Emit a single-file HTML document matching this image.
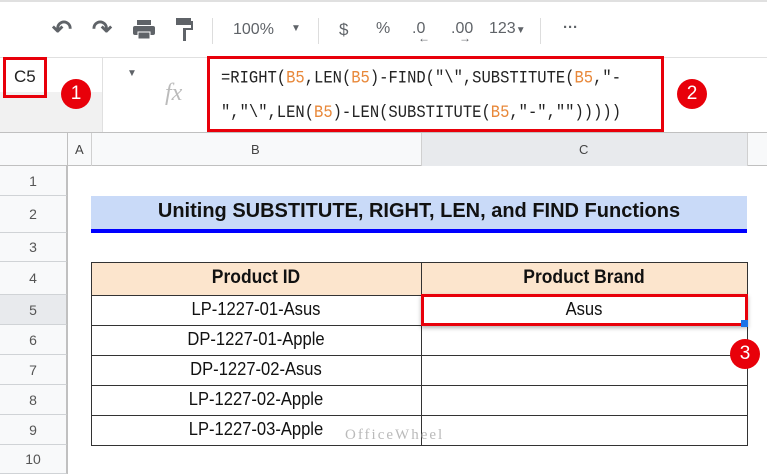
<!DOCTYPE html>
<html><head><meta charset="utf-8"><style>
*{margin:0;padding:0;box-sizing:border-box}
body{width:767px;height:474px;overflow:hidden;background:#fff;font-family:"Liberation Sans",Arial,sans-serif;position:relative}
.a{position:absolute}
.tb{color:#5f6368;font-size:15px}
.rh{position:absolute;left:0;width:67px;background:#f8f9fa;border-bottom:1px solid #d0d3d6;border-right:1px solid #c0c0c0;color:#555;font-size:14px;text-align:center}
.badge{position:absolute;width:30px;height:30px;border-radius:50%;background:#e8000a;color:#fff;font-size:19px;text-align:center;line-height:30px}
.cell{position:absolute;font-size:17px;text-align:center;color:#111;transform:scaleX(0.92)}
.hl{position:absolute;background:#333;height:1px}
.vl{position:absolute;background:#333;width:1px}
.o{color:#e8883a}
</style></head><body>
<div class="a" style="left:0;top:0;width:767px;height:2px;background:#e0e0e0"></div>
<div class="a tb" style="left:52px;top:15px;font-size:24px;font-weight:bold">↶</div>
<div class="a tb" style="left:92px;top:15px;font-size:24px;font-weight:bold">↷</div>
<svg class="a" style="left:133px;top:20px" width="24" height="20"><rect x="4" y="0" width="14" height="5" fill="#5f6368"/><rect x="0" y="6" width="22" height="9" rx="2" fill="#5f6368"/><rect x="5" y="12" width="12" height="7" fill="#5f6368" stroke="#fff" stroke-width="1"/></svg>
<svg class="a" style="left:176px;top:18px" width="18" height="24"><rect x="0" y="0" width="15" height="7" fill="#5f6368"/><rect x="15" y="3" width="2" height="8" fill="#5f6368"/><rect x="7" y="10" width="10" height="2" fill="#5f6368"/><rect x="7" y="10" width="3" height="13" fill="#5f6368"/></svg>
<div class="a" style="left:212px;top:18px;width:1px;height:26px;background:#ddd"></div>
<div class="a tb" style="left:233px;top:21px;font-size:16px">100%</div>
<div class="a tb" style="left:291px;top:23px;font-size:10px">▼</div>
<div class="a" style="left:318px;top:18px;width:1px;height:26px;background:#ddd"></div>
<div class="a tb" style="left:339px;top:20px;font-size:17px">$</div>
<div class="a tb" style="left:376px;top:20px;font-size:16px">%</div>
<div class="a tb" style="left:412px;top:20px;font-size:16px">.0<div style="font-size:12px;margin:-7px 0 0 6px">←</div></div>
<div class="a tb" style="left:451px;top:20px;font-size:16px">.00<div style="font-size:12px;margin:-7px 0 0 8px">→</div></div>
<div class="a tb" style="left:489px;top:20px;font-size:16px">123<span style="font-size:10px">▼</span></div>
<div class="a" style="left:540px;top:18px;width:1px;height:26px;background:#ddd"></div>
<div class="a tb" style="left:563px;top:19px;font-weight:bold">···</div>
<div class="a" style="left:0;top:57px;width:767px;height:1px;background:#e0e0e0"></div>
<div class="a" style="left:0;top:92px;width:102px;height:40px;background:#f1f1f1"></div>
<div class="a" style="left:102px;top:58px;width:1px;height:74px;background:#e0e0e0"></div>
<div class="a" style="left:14px;top:67px;font-size:17px;color:#222">C5</div>
<div class="a" style="left:3px;top:57px;width:44px;height:41px;border:3px solid #e8000a"></div>
<div class="badge" style="left:61px;top:79px">1</div>
<div class="a tb" style="left:127px;top:68px;font-size:10px">▼</div>
<div class="a" style="left:165px;top:80px;font-family:'Liberation Serif',serif;font-style:italic;font-size:24px;color:#bbb">fx</div>
<div class="a" style="left:207px;top:56px;width:457px;height:76px;border:3px solid #e8000a;background:#fff"></div>
<div class="a" style="left:221px;top:62px;font-family:'Liberation Mono',monospace;font-size:15.5px;line-height:29.5px;color:#222;white-space:nowrap;transform:scaleY(1.15);transform-origin:0 0">=RIGHT(<span class="o">B5</span>,LEN(<span class="o">B5</span>)-FIND("\",SUBSTITUTE(<span class="o">B5</span>,"-<br>","\",LEN(<span class="o">B5</span>)-LEN(SUBSTITUTE(<span class="o">B5</span>,"-",""))))) </div>
<div class="badge" style="left:677px;top:79px">2</div>
<div class="a" style="left:0;top:132px;width:767px;height:1px;background:#c0c0c0"></div>
<div class="a" style="left:0;top:133px;width:767px;height:33px;background:#f8f9fa;border-bottom:1px solid #c0c0c0"></div>
<div class="a" style="left:421px;top:133px;width:326px;height:33px;background:#e8eaed"></div>
<div class="a" style="left:67px;top:133px;width:1px;height:341px;background:#c0c0c0"></div>
<div class="a" style="left:91px;top:133px;width:1px;height:33px;background:#d0d0d0"></div>
<div class="a" style="left:421px;top:133px;width:1px;height:33px;background:#d0d0d0"></div>
<div class="a" style="left:747px;top:133px;width:1px;height:33px;background:#d0d0d0"></div>
<div class="a" style="left:75px;top:142px;font-size:13px;color:#444">A</div>
<div class="a" style="left:251px;top:142px;font-size:13px;color:#444">B</div>
<div class="a" style="left:579px;top:142px;font-size:13px;color:#444">C</div>
<div class="rh" style="top:166px;height:30px;line-height:30px">1</div>
<div class="rh" style="top:196px;height:37px;line-height:37px">2</div>
<div class="rh" style="top:233px;height:29px;line-height:29px">3</div>
<div class="rh" style="top:262px;height:33px;line-height:33px">4</div>
<div class="rh" style="top:295px;height:30px;line-height:30px;background:#e8eaed">5</div>
<div class="rh" style="top:325px;height:30px;line-height:30px">6</div>
<div class="rh" style="top:355px;height:30px;line-height:30px">7</div>
<div class="rh" style="top:385px;height:30px;line-height:30px">8</div>
<div class="rh" style="top:415px;height:30px;line-height:30px">9</div>
<div class="rh" style="top:445px;height:29px;line-height:29px">10</div>
<div class="a" style="left:91px;top:196px;width:656px;height:34px;background:#c9daf8"></div>
<div class="a" style="left:91px;top:229px;width:656px;height:4px;background:#0000ff"></div>
<div class="a" style="left:91px;top:200px;width:656px;text-align:center;font-size:20px;font-weight:bold;color:#111">Uniting SUBSTITUTE, RIGHT, LEN, and FIND Functions</div>
<div class="a" style="left:91px;top:262px;width:656px;height:33px;background:#fce5cd"></div>
<div class="hl" style="left:91px;top:262px;width:657px"></div>
<div class="hl" style="left:91px;top:295px;width:657px"></div>
<div class="hl" style="left:91px;top:325px;width:657px"></div>
<div class="hl" style="left:91px;top:355px;width:657px"></div>
<div class="hl" style="left:91px;top:385px;width:657px"></div>
<div class="hl" style="left:91px;top:415px;width:657px"></div>
<div class="hl" style="left:91px;top:445px;width:657px"></div>
<div class="vl" style="left:91px;top:262px;height:184px"></div>
<div class="vl" style="left:421px;top:262px;height:184px"></div>
<div class="vl" style="left:747px;top:262px;height:184px"></div>
<div class="cell" style="left:91px;top:267px;width:330px;font-weight:bold;font-size:19px">Product ID</div>
<div class="cell" style="left:421px;top:267px;width:326px;font-weight:bold;font-size:19px">Product Brand</div>
<div class="cell" style="left:91px;top:299px;width:330px;font-size:18px">LP-1227-01-Asus</div>
<div class="cell" style="left:91px;top:329px;width:330px;font-size:18px">DP-1227-01-Apple</div>
<div class="cell" style="left:91px;top:359px;width:330px;font-size:18px">DP-1227-02-Asus</div>
<div class="cell" style="left:91px;top:389px;width:330px;font-size:18px">LP-1227-02-Apple</div>
<div class="cell" style="left:91px;top:419px;width:330px;font-size:18px">LP-1227-03-Apple</div>
<div class="cell" style="left:421px;top:299px;width:326px;font-size:18px">Asus</div>
<div class="a" style="left:421px;top:294px;width:327px;height:32px;border:3px solid #e8000a;box-shadow:0 2px 4px rgba(0,0,0,0.3)"></div>
<div class="a" style="left:741px;top:320px;width:7px;height:7px;background:#1a73e8"></div>
<div class="badge" style="left:730px;top:339px">3</div>
<div class="a" style="left:345px;top:427px;font-family:'Liberation Serif',serif;font-size:15px;color:#aaa;letter-spacing:2px;opacity:.8">OfficeWheel</div>
</body></html>
